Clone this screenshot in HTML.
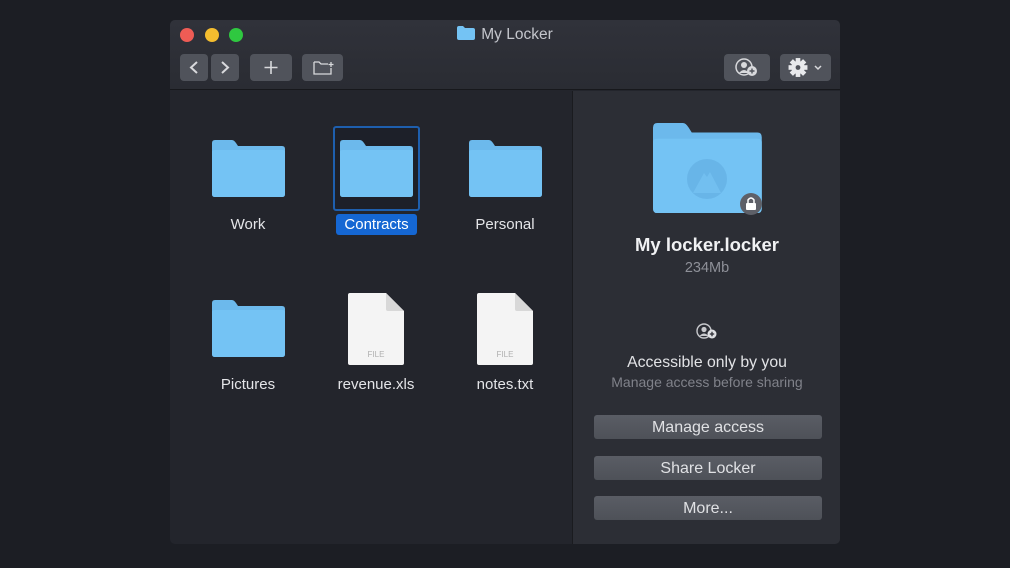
<!DOCTYPE html>
<html><head><meta charset="utf-8"><style>
*{margin:0;padding:0;box-sizing:border-box}
body{width:1010px;height:568px;background:#1c1e24;font-family:"Liberation Sans",sans-serif;position:relative;overflow:hidden}
.win{position:absolute;left:170px;top:20px;width:670px;height:524px;background:#23252c;border-radius:5px;overflow:hidden}
.bar{position:absolute;left:0;top:0;width:670px;height:70px;background:linear-gradient(#30323a,#2a2c33);border-bottom:1px solid #17181c}
.dot{position:absolute;top:8px;width:14px;height:14px;border-radius:50%}
.title{position:absolute;top:6px;left:0;width:670px;text-align:center;color:#c4c6cc;font-size:15.5px}
.btn{position:absolute;top:34px;height:27px;background:#50535b;border-radius:4px;color:#d8d9dc}
.right{position:absolute;left:402px;top:71px;width:268px;height:453px;background:#2c2e35;border-left:1px solid #1a1b1f}
.lbl{position:absolute;width:120px;text-align:center;color:#e4e5e8;font-size:15px}
.fold{position:absolute}
.rb{position:absolute;left:21px;width:228px;height:24px;background:linear-gradient(#5a5d65,#4e5158);border-radius:3px;color:#e0e1e4;font-size:16px;text-align:center;line-height:26px}
</style></head><body>
<svg width="0" height="0" style="position:absolute"><defs>
<g id="f"><path d="M0 3 Q0 0 3 0 H20 Q22 0 24 3 L26 6 H70 Q73 6 73 9 V54 Q73 57 70 57 H3 Q0 57 0 54Z" fill="#6cb9ec"/><path d="M0 12 Q0 10 3 10 H70 Q73 10 73 12 V54 Q73 57 70 57 H3 Q0 57 0 54Z" fill="#74c3f4"/></g>
<g id="d"><path d="M0 2 Q0 0 2 0 H38 L56 18 V70 Q56 72 54 72 H2 Q0 72 0 70Z" fill="#f4f4f4"/><path d="M38 0 V16 Q38 18 40 18 H56Z" fill="#d8d8d8"/><text x="28" y="64" font-size="8" fill="#b0b0b0" text-anchor="middle" font-family="Liberation Sans">FILE</text></g>
</defs></svg>
<div class="win">
<div class="bar">
<div class="dot" style="left:10px;background:#ee5c55"></div>
<div class="dot" style="left:35px;background:#f4bd2f"></div>
<div class="dot" style="left:59px;background:#2fc840"></div>
<div class="title"><svg width="18" height="14" style="vertical-align:-1px;margin-right:6px"><path d="M0 2 Q0 0 2 0 H6 L8 2 H16 Q18 2 18 4 V12 Q18 14 16 14 H2 Q0 14 0 12Z" fill="#74c3f4"/></svg>My Locker</div>
<div class="btn" style="left:10px;width:28px"><svg width="28" height="27"><path d="M17 8 L11 13.5 L17 19" stroke="#d8d9dc" stroke-width="2" fill="none"/></svg></div>
<div class="btn" style="left:41px;width:28px"><svg width="28" height="27"><path d="M11 8 L17 13.5 L11 19" stroke="#d8d9dc" stroke-width="2" fill="none"/></svg></div>
<div class="btn" style="left:80px;width:42px"><svg width="42" height="27"><path d="M21 7 V20 M14.5 13.5 H27.5" stroke="#d8d9dc" stroke-width="1.6"/></svg></div>
<div class="btn" style="left:132px;width:41px"><svg width="41" height="27"><path d="M12 8 H17 L19 10 H26 M12 8 V20 H29 V14" stroke="#d8d9dc" stroke-width="1.3" fill="none"/><path d="M29 8 V13 M26.5 10.5 H31.5" stroke="#d8d9dc" stroke-width="1.3"/></svg></div>
<div class="btn" style="left:554px;width:46px"><svg width="46" height="27"><circle cx="20" cy="13" r="8" fill="none" stroke="#d8d9dc" stroke-width="1.5"/><circle cx="20" cy="11" r="3" fill="#d8d9dc"/><path d="M15 19 Q20 13 25 19Z" fill="#d8d9dc"/><circle cx="28" cy="17" r="5" fill="#d8d9dc"/><path d="M28 14.5 V19.5 M25.5 17 H30.5" stroke="#50535b" stroke-width="1.4"/></svg></div>
<div class="btn" style="left:610px;width:51px"><svg width="51" height="27"><g transform="translate(18 13.5) scale(1.05)" fill="#e8e9ec"><circle r="6.3"/><g id="t"><rect x="-2.2" y="-9" width="4.4" height="18"/></g><use href="#t" transform="rotate(45)"/><use href="#t" transform="rotate(90)"/><use href="#t" transform="rotate(135)"/><circle r="2.3" fill="#50535b"/></g><path d="M35 12 L38 15 L41 12" stroke="#d8d9dc" stroke-width="1.5" fill="none"/></svg></div>
</div>
<svg class="fold" style="left:42px;top:120px" width="73" height="57"><use href="#f"/></svg>
<div class="lbl" style="left:18px;top:196px">Work</div>
<div style="position:absolute;left:163px;top:106px;width:87px;height:85px;border:2px solid #1e5fae;border-radius:3px;background:#1d2029"></div>
<svg class="fold" style="left:170px;top:120px" width="73" height="57"><use href="#f"/></svg>
<div style="position:absolute;left:166px;top:194px;width:81px;height:21px;background:#1567d3;border-radius:3px;color:#fff;font-size:15px;text-align:center;line-height:21px">Contracts</div>
<svg class="fold" style="left:299px;top:120px" width="73" height="57"><use href="#f"/></svg>
<div class="lbl" style="left:275px;top:196px">Personal</div>
<svg class="fold" style="left:42px;top:280px" width="73" height="57"><use href="#f"/></svg>
<div class="lbl" style="left:18px;top:356px">Pictures</div>
<svg class="fold" style="left:178px;top:273px" width="56" height="72"><use href="#d"/></svg>
<div class="lbl" style="left:146px;top:356px">revenue.xls</div>
<svg class="fold" style="left:307px;top:273px" width="56" height="72"><use href="#d"/></svg>
<div class="lbl" style="left:275px;top:356px">notes.txt</div>
<div class="right">
<svg style="position:absolute;left:80px;top:32px" width="112" height="100"><g transform="scale(1.49 1.58)"><use href="#f"/></g><circle cx="54" cy="56" r="20" fill="#68b5e8"/><path d="M40 70 L51 50 L54 54 L57 49 L68 70Z" fill="#72bff0"/><circle cx="98" cy="81" r="11" fill="#5e6068"/><rect x="93" y="80" width="10" height="7" rx="1" fill="#fff"/><path d="M95 80 V77 Q98 73 101 77 V80" stroke="#fff" stroke-width="1.5" fill="none"/></svg>
<div style="position:absolute;left:0;top:143px;width:268px;text-align:center;color:#f0f1f3;font-size:18.5px;font-weight:bold">My locker.locker</div>
<div style="position:absolute;left:0;top:169px;width:268px;text-align:center;color:#8e9098;font-size:14.5px">234Mb</div>
<svg style="position:absolute;left:121px;top:231px" width="26" height="20"><circle cx="10" cy="9" r="7" fill="none" stroke="#c8c9cd" stroke-width="1.4"/><circle cx="10" cy="7.5" r="2.6" fill="#c8c9cd"/><path d="M5.5 14 Q10 9 14.5 14Z" fill="#c8c9cd"/><circle cx="18" cy="12" r="4.5" fill="#e0e1e4"/><path d="M18 9.8 V14.2 M15.8 12 H20.2" stroke="#2c2e35" stroke-width="1.3"/></svg>
<div style="position:absolute;left:0;top:263px;width:268px;text-align:center;color:#e2e3e6;font-size:15.8px">Accessible only by you</div>
<div style="position:absolute;left:0;top:283px;width:268px;text-align:center;color:#80828a;font-size:14px">Manage access before sharing</div>
<div class="rb" style="top:324px">Manage access</div>
<div class="rb" style="top:365px">Share Locker</div>
<div class="rb" style="top:405px">More...</div>
</div>
</div>
</body></html>
